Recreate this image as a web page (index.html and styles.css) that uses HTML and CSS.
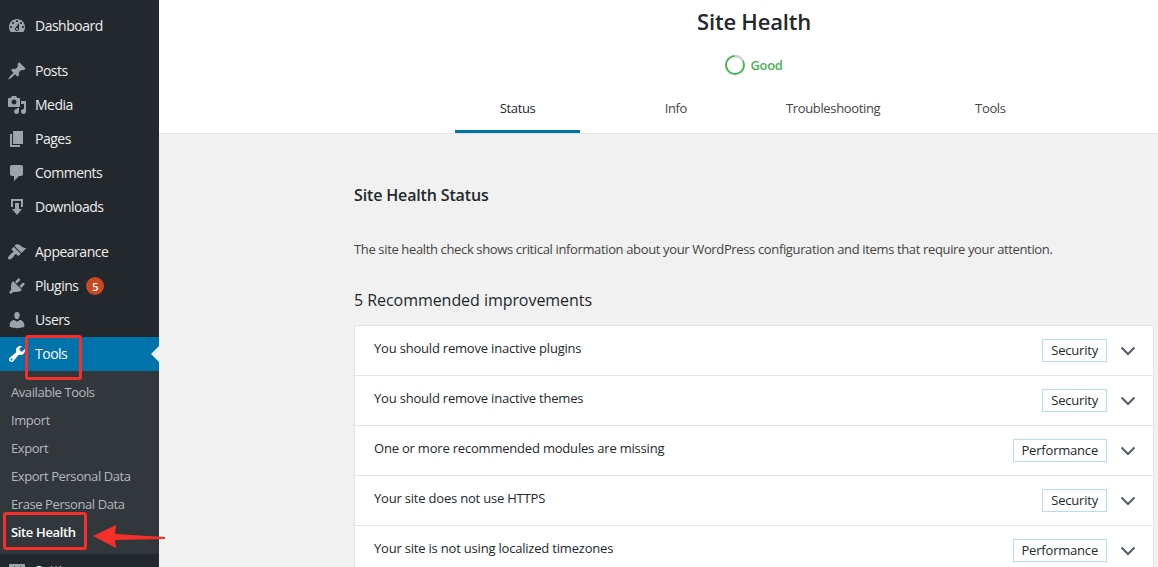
FILE: index.html
```html
<!DOCTYPE html>
<html lang="en">
<head>
<meta charset="utf-8">
<title>Site Health</title>
<link rel="stylesheet" href="styles.css">
</head>
<body>
<div class="page">
  <nav class="sidebar">
    <ul class="menu">
      <li class="item"><svg class="ico" viewBox="0 0 20 20"><path fill-rule="evenodd" d="M3.76 16h12.48c1.1-1.37 1.76-3.11 1.76-5 0-4.42-3.58-8-8-8s-8 3.58-8 8c0 1.89.66 3.63 1.76 5zM10 4c.55 0 1 .45 1 1s-.45 1-1 1-1-.45-1-1 .45-1 1-1zM6 6c.55 0 1 .45 1 1s-.45 1-1 1-1-.45-1-1 .45-1 1-1zm8 0c.55 0 1 .45 1 1s-.45 1-1 1-1-.45-1-1 .45-1 1-1zm-5.370 5.550L12 7v6c0 1.100-.9 2-2 2s-2-.9-2-2c0-.57.24-1.080.63-1.450zM4 10c.55 0 1 .45 1 1s-.45 1-1 1-1-.45-1-1 .45-1 1-1zm12 0c.55 0 1 .45 1 1s-.45 1-1 1-1-.45-1-1 .45-1 1-1zm-5 3c0-.55-.45-1-1-1s-1 .45-1 1 .45 1 1 1 1-.45 1-1z"/></svg>Dashboard</li>
      <li class="item sep"><svg class="ico" viewBox="0 0 20 20"><path d="M10.44 3.02l1.82-1.82 6.36 6.35-1.83 1.82c-1.05-.68-2.48-.57-3.41.36l-.75.75c-.92.93-1.04 2.35-.35 3.41l-1.83 1.82-2.41-2.41-2.8 2.79c-.42.42-3.38 2.71-3.8 2.29s1.86-3.39 2.28-3.81l2.79-2.79L4.1 9.36l1.83-1.82c1.05.69 2.48.57 3.4-.36l.75-.75c.93-.92 1.05-2.35.36-3.41z"/></svg>Posts</li>
      <li class="item"><svg class="ico" viewBox="0 0 20 20"><path fill-rule="evenodd" d="M13 11V4c0-.55-.45-1-1-1h-1.67L9 1H5L3.67 3H2c-.55 0-1 .45-1 1v7c0 .55.45 1 1 1h10c.55 0 1-.45 1-1zM7 4.500c1.380 0 2.500 1.120 2.500 2.500S8.380 9.500 7 9.500 4.500 8.380 4.500 7 5.620 4.500 7 4.500zM14 6h5v10.500c0 1.380-1.120 2.500-2.500 2.500S14 17.880 14 16.500s1.120-2.500 2.500-2.500c.17 0 .34.02.5.05V9h-3V6zm-4 8.050V13h2v3.500c0 1.380-1.120 2.500-2.500 2.500S7 17.880 7 16.500 8.120 14 9.500 14c.17 0 .34.02.5.05z"/></svg>Media</li>
      <li class="item"><svg class="ico" viewBox="0 0 20 20"><path d="M6 15V2h10v13H6zm-1 1h8v2H3V5h2v11z"/></svg>Pages</li>
      <li class="item"><svg class="ico" viewBox="0 0 20 20"><path d="M5 2h9c1.100 0 2 .9 2 2v7c0 1.100-.9 2-2 2h-2l-5 5v-5H5c-1.100 0-2-.9-2-2V4c0-1.100.9-2 2-2z"/></svg>Comments</li>
      <li class="item"><svg class="ico" viewBox="0 0 20 20"><path d="M14.010 4v6h2V2H4v8h2.010V4h8zm-2 2v6h3l-5 6-5-6h3V6h4z"/></svg>Downloads</li>
      <li class="item sep"><svg class="ico" viewBox="0 0 20 20"><path d="M14.48 11.06L7.41 3.99l1.5-1.5c.5-.56 2.3-.47 3.51.32 1.21.8 1.43 1.28 2.91 2.1 1.18.64 2.45 1.26 4.45.85zm-.71.71L6.7 4.7 4.93 6.47c-.39.39-.39 1.02 0 1.41l1.06 1.06c.39.39.39 1.03 0 1.42-.6.6-1.43 1.11-2.21 1.69-.35.26-.7.53-1.01.84C1.43 14.23.4 16.08 1.4 17.07c.99 1 2.84-.03 4.18-1.36.31-.31.58-.66.85-1.02.57-.78 1.08-1.61 1.69-2.21.39-.39 1.02-.39 1.41 0l1.06 1.06c.39.39 1.02.39 1.41 0z"/></svg>Appearance</li>
      <li class="item"><svg class="ico" viewBox="0 0 20 20"><path d="M13.11 4.36L9.87 7.6 8 5.73l3.24-3.24c.35-.34 1.05-.2 1.56.32.52.51.66 1.21.31 1.55zm-8 1.77l.91-1.12 9.01 9.01-1.19.84c-.71.71-2.63 1.16-3.82 1.16H6.14L4.9 17.26c-.59.59-1.54.59-2.12 0-.59-.58-.59-1.53 0-2.12l1.24-1.24v-3.88c0-1.13.4-3.19 1.09-3.89zm7.26 3.97l3.24-3.24c.34-.35 1.04-.21 1.55.31.52.51.66 1.21.31 1.55l-3.24 3.25z"/></svg>Plugins<span class="badge">5</span></li>
      <li class="item"><svg class="ico" viewBox="0 0 20 20"><path d="M10 9.25c-2.27 0-2.73-3.44-2.73-3.44C7 4.02 7.82 2 9.97 2c2.16 0 2.98 2.02 2.71 3.81 0 0-.41 3.44-2.68 3.44zm0 2.57L12.72 10c2.39 0 4.52 2.33 4.52 4.53v2.49s-3.65 1.13-7.24 1.13c-3.65 0-7.24-1.13-7.24-1.13v-2.49c0-2.25 1.94-4.48 4.47-4.48z"/></svg>Users</li>
      <li class="item current"><svg class="ico" viewBox="0 0 20 20"><path fill-rule="evenodd" d="M16.68 9.77c-1.34 1.34-3.3 1.67-4.95.99l-5.41 6.52c-.99.99-2.59.99-3.58 0s-.99-2.59 0-3.57l6.52-5.42c-.68-1.65-.35-3.61.99-4.95 1.28-1.28 3.12-1.62 4.72-1.06l-2.89 2.89 2.82 2.82 2.86-2.87c.53 1.58.18 3.39-1.08 4.65zM3.81 16.21c.4.39 1.04.39 1.43 0 .4-.4.4-1.04 0-1.43-.39-.4-1.03-.4-1.43 0-.39.39-.39 1.03 0 1.43z"/></svg>Tools</li>
    </ul>
    <ul class="submenu">
      <li>Available Tools</li>
      <li>Import</li>
      <li>Export</li>
      <li>Export Personal Data</li>
      <li>Erase Personal Data</li>
      <li class="sub-current">Site Health</li>
    </ul>
    <ul class="menu">
      <li class="item"><svg class="ico" viewBox="0 0 20 20"><path fill-rule="evenodd" d="M18 16V4c0-.55-.45-1-1-1H3c-.55 0-1 .45-1 1v12c0 .55.45 1 1 1h14c.55 0 1-.45 1-1zM8 11h1c.55 0 1 .45 1 1s-.45 1-1 1H8v1.500c0 .28-.22.5-.5.5s-.5-.22-.5-.5V13H6c-.55 0-1-.45-1-1s.45-1 1-1h1V5.500c0-.28.22-.5.5-.5s.5.22.5.5V11zm5-2h-1c-.55 0-1-.45-1-1s.45-1 1-1h1V5.500c0-.28.22-.5.5-.5s.5.22.5.5V7h1c.55 0 1 .45 1 1s-.45 1-1 1h-1v5.500c0 .28-.22.5-.5.5s-.5-.22-.5-.5V9z"/></svg>Settings</li>
    </ul>
  </nav>
  <main class="main">
    <header class="head">
      <h1 class="title">Site Health</h1>
      <div class="rating">
        <svg class="ring" viewBox="0 0 20 20"><circle cx="10" cy="10" r="9" fill="none" stroke="#46b450" stroke-width="2"/><path d="M10 1a9 9 0 0 1 8 5" fill="none" stroke="#d5d5d5" stroke-width="2"/></svg>
        <span>Good</span>
      </div>
      <div class="tabs">
        <div class="tab active">Status</div>
        <div class="tab">Info</div>
        <div class="tab">Troubleshooting</div>
        <div class="tab">Tools</div>
      </div>
    </header>
    <section class="body">
      <h2 class="status">Site Health Status</h2>
      <p class="intro">The site health check shows critical information about your WordPress configuration and items that require your attention.</p>
      <h3 class="count">5 Recommended improvements</h3>
      <div class="list">
        <div class="row"><span class="label">You should remove inactive plugins</span><span class="tag">Security</span><svg class="chev" viewBox="0 0 16 10"><path d="M1.500 1.500 8 8l6.500-6.500"/></svg></div>
        <div class="row"><span class="label">You should remove inactive themes</span><span class="tag">Security</span><svg class="chev" viewBox="0 0 16 10"><path d="M1.500 1.500 8 8l6.500-6.500"/></svg></div>
        <div class="row"><span class="label">One or more recommended modules are missing</span><span class="tag">Performance</span><svg class="chev" viewBox="0 0 16 10"><path d="M1.500 1.500 8 8l6.500-6.500"/></svg></div>
        <div class="row"><span class="label">Your site does not use HTTPS</span><span class="tag">Security</span><svg class="chev" viewBox="0 0 16 10"><path d="M1.500 1.500 8 8l6.500-6.500"/></svg></div>
        <div class="row"><span class="label">Your site is not using localized timezones</span><span class="tag">Performance</span><svg class="chev" viewBox="0 0 16 10"><path d="M1.500 1.500 8 8l6.500-6.500"/></svg></div>
      </div>
    </section>
  </main>
  <div class="mark mark-tools"></div>
  <div class="mark mark-health"></div>
  <svg class="arrow" viewBox="0 0 76 28"><path d="M3 13 L26 2 L25 11 L75 14 L75 16 L25 17 L26 25 Z"/></svg>
</div>
</body>
</html>
```
FILE: styles.css
```css
* { box-sizing: border-box; }
html, body { margin: 0; padding: 0; height: 100%; overflow: hidden; }
body { font-family: "Open Sans", "Liberation Sans", sans-serif; font-size: 13px; color: #444; background: #f1f1f1; }
ul { list-style: none; margin: 0; padding: 0; }
.page { position: relative; display: flex; width: 1349px; height: 567px; overflow: hidden; }
.sidebar { flex: 0 0 159px; width: 159px; height: 567px; background: #23282d; padding-top: 9px; color: #eee; overflow: hidden; }
.item { position: relative; display: flex; align-items: center; height: 34px; padding: 0 0 2px 7px; font-size: 14px; letter-spacing: -0.5px; color: #eee; }
.item.sep { margin-top: 11px; }
.ico { width: 20px; height: 20px; margin: 2px 8px 0 0; fill: #9ea3a8; flex: none; }
.badge { display: inline-flex; align-items: center; justify-content: center; width: 18px; height: 18px; margin: 2px 0 0 8px; border-radius: 50%; background: #ca4a1f; color: #fff; font-size: 11px; font-weight: 600; letter-spacing: 0; }
.item.current { background: #0073aa; color: #fff; }
.item.current .ico { fill: #fff; }
.item.current::after { content: ""; position: absolute; right: 0; top: 50%; margin-top: -8px; border: 8px solid transparent; border-right-color: #f1f1f1; border-left-width: 0; }
.submenu { background: #32373c; padding: 7px 0 8px; }
.submenu li { height: 28px; line-height: 28px; padding-left: 11px; font-size: 13px; letter-spacing: -0.42px; color: #b4b9be; }
.submenu .sub-current { color: #fff; font-weight: 600; letter-spacing: -0.35px; }
.main { flex: 0 0 1190px; width: 1190px; display: flex; flex-direction: column; }
.head { background: #fff; height: 134px; border-bottom: 1px solid #e2e4e7; display: flex; flex-direction: column; align-items: center; }
.title { margin: 5px 0 0; height: 33px; line-height: 33px; font-size: 22px; font-weight: 600; color: #23282d; letter-spacing: -0.2px; }
.rating { display: flex; align-items: center; gap: 5px; margin-top: 16px; height: 22px; color: #46b450; font-weight: 600; font-size: 13px; letter-spacing: -0.3px; }
.ring { width: 20px; height: 20px; }
.tabs { display: flex; width: 630px; margin-top: 11px; }
.tab { flex: 1; height: 47px; margin: 0 16px; text-align: center; line-height: 44px; font-size: 13px; color: #444; letter-spacing: -0.35px; }
.tab.active { border-bottom: 3px solid #0073aa; color: #23282d; margin-right: 17px; }
.body { width: 800px; margin: 0 auto; }
.status { margin: 48px 0 0; height: 26px; line-height: 26px; font-size: 16px; font-weight: 600; color: #23282d; letter-spacing: -0.15px; }
.intro { margin: 31px 0 0; height: 20px; line-height: 20px; font-size: 13px; color: #444; letter-spacing: -0.36px; }
.count { margin: 29px 0 0; height: 24px; line-height: 24px; font-size: 16px; font-weight: 400; color: #23282d; letter-spacing: -0.05px; }
.list { margin-top: 13px; border: 1px solid #e2e4e7; background: #fff; }
.row { display: flex; align-items: center; height: 50px; padding: 0 17px 0 19px; border-bottom: 1px solid #e2e4e7; }
.label { flex: 1; margin-top: -5px; font-size: 13px; font-weight: 400; color: #23282d; letter-spacing: -0.2px; }
.tag { height: 23px; line-height: 21px; padding: 0 8px; border: 1px solid #b5dff0; font-size: 13px; color: #23282d; letter-spacing: -0.2px; }
.chev { width: 16px; height: 10px; margin-left: 13px; fill: none; stroke: #555d66; stroke-width: 2; }
.mark { position: absolute; border: 3px solid #f5302a; border-radius: 3px; }
.mark-tools { left: 25px; top: 335px; width: 57px; height: 45px; }
.mark-health { left: 3px; top: 512px; width: 84px; height: 38px; }
.arrow { position: absolute; left: 90px; top: 523px; width: 76px; height: 28px; fill: #f5302a; }
```
